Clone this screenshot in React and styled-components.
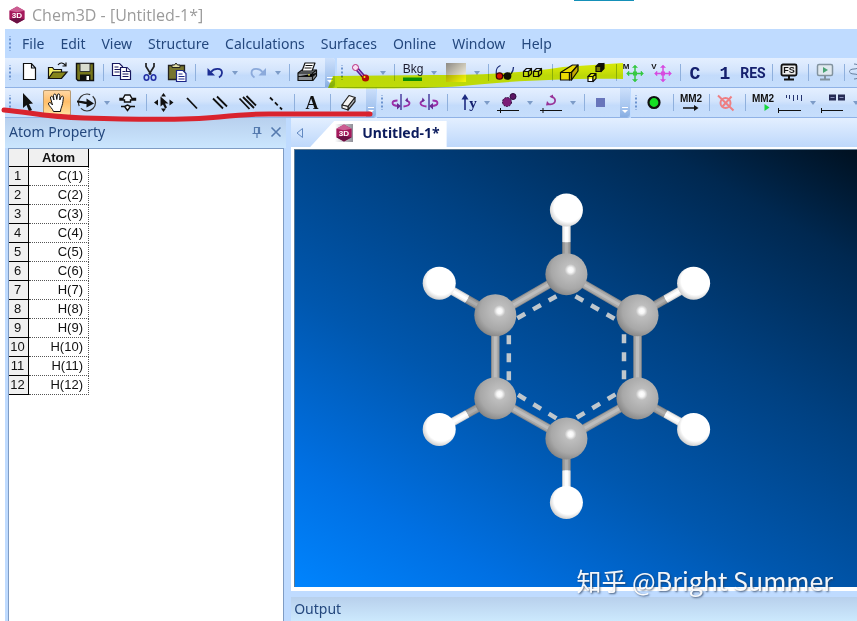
import React from 'react';
import styled, { createGlobalStyle, ThemeProvider } from 'styled-components';

const theme = {
  colors: {
    frame: '#bfdbff',
    ink: '#24487e',
    border: '#7f9cc4',
    line: '#8fb2e6',
  },
  fonts: {
    ui: "'Noto Sans', 'Open Sans', sans-serif",
    title: "'Open Sans', 'Noto Sans', sans-serif",
    table: "'Liberation Sans', Arial, sans-serif",
    mark: "'Noto Sans CJK SC', sans-serif",
  },
};

const GlobalStyle = createGlobalStyle`
  * {
    box-sizing: border-box;
  }

  body {
    margin: 0;
    background: white;
  }

  button {
    padding: 0;
    border: 0;
    background: none;
    font: inherit;
    color: inherit;
  }
`;

const Window = styled.div`
  display: flex;
  flex-direction: column;
  position: relative;
  min-height: 100vh;
  overflow: hidden;
  font-family: ${({ theme }) => theme.fonts.ui};
  font-size: 14px;
  color: ${({ theme }) => theme.colors.ink};
`;

const TitleBar = styled.header`
  display: flex;
  align-items: center;
  gap: 6px;
  height: 29px;
  padding-left: 8px;
  background: white;

  h1 {
    margin: 0;
    font-family: ${({ theme }) => theme.fonts.title};
    font-size: 16px;
    font-weight: 400;
    color: #9b9b9b;
  }
`;

const TopMark = styled.span`
  position: absolute;
  top: 0;
  left: 67%;
  width: 7%;
  height: 1px;
  background: #1590b8;
`;

const Frame = styled.div`
  display: flex;
  flex: 1;
  flex-direction: column;
  margin-left: 5px;
  background: ${({ theme }) => theme.colors.frame};
`;

const MenuBar = styled.nav`
  display: flex;
  align-items: center;
  height: 29px;
  line-height: 20px;
  white-space: nowrap;

  div {
    display: flex;
    gap: 16px;
    padding-left: 7px;
  }
`;

const ToolRow = styled.div`
  display: flex;
  gap: ${({ $gap }) => $gap};
  height: 30px;
  overflow: hidden;
`;

const ToolStrip = styled.div`
  display: flex;
  flex: ${({ $grow }) => ($grow ? '1 0 auto' : 'none')};
  border-bottom: 1px solid ${({ theme }) => theme.colors.line};
  border-radius: 0 3px 3px 0;
  background: linear-gradient(#e4efff, #d3e4fc 45%, #c3dbfb 60%, #c6defc);
`;

const Grip = styled.span`
  flex: none;
  align-self: ${({ $centered }) => ($centered ? 'center' : 'flex-start')};
  width: 10px;
  height: 15px;
  margin-top: ${({ $centered }) => ($centered ? '0' : '7px')};
  background: radial-gradient(circle, #6b93cf 1px, transparent 1px) center / 4px 4px
    repeat-y;
`;

const ToolButton = styled.button`
  flex: none;
  width: 28px;
  height: 28px;

  svg {
    display: block;
    overflow: visible;
  }
`;

const ActiveToolButton = styled(ToolButton)`
  height: 26px;
  margin-top: 2px;
  border-radius: 2px;
  background: linear-gradient(#ffd9a8, #ffbe69 45%, #ffe3a3);
  box-shadow: inset 0 0 0 1px #b79a72;

  svg {
    margin-top: -2px;
  }
`;

const DropButton = styled.button`
  display: flex;
  flex: none;
  align-items: center;
  justify-content: center;
  width: 15px;
  height: 30px;

  &::after {
    content: '';
    border: 3px solid transparent;
    border-top: 4px solid #7d9cc8;
    border-bottom: 0;
  }
`;

const Divider = styled.span`
  flex: none;
  width: 8px;
  height: 17px;
  margin-top: 6px;
  background: linear-gradient(#8fb0dd, #8fb0dd) center / 1px 100% no-repeat;
`;

const MoreButton = styled.button`
  display: flex;
  flex: none;
  flex-direction: column;
  align-items: center;
  justify-content: flex-end;
  gap: 2px;
  width: 10px;
  margin-left: 4px;
  padding-bottom: 4px;
  border-radius: 0 3px 3px 0;
  background: linear-gradient(#cde0fb, #a9c7f0 60%, #88aee2);

  &::before {
    content: '';
    width: 6px;
    height: 1px;
    background: white;
  }

  &::after {
    content: '';
    border: 3px solid transparent;
    border-top-color: white;
    border-bottom: 0;
  }
`;

const Workspace = styled.main`
  display: grid;
  flex: 1;
  grid-template-columns: minmax(180px, 33%) minmax(0, 1fr);
  gap: 5px;
`;

const Panel = styled.aside`
  display: flex;
  flex-direction: column;
`;

const PanelHeader = styled.div`
  display: flex;
  align-items: center;
  justify-content: space-between;
  height: 30px;
  padding: 0 3px 2px 4px;
  background: linear-gradient(#b8d0ee, #cbe6fe);

  h2 {
    margin: 0;
    font-size: 14px;
    font-weight: 400;
    line-height: 20px;
  }

  div {
    display: flex;
    gap: 5px;
  }

  button {
    height: 14px;
  }

  svg {
    display: block;
  }
`;

const PanelBody = styled.div`
  flex: 1;
  margin: 0 2px 0 3px;
  border: 1px solid ${({ theme }) => theme.colors.border};
  border-bottom: 0;
  background: white;
`;

const AtomTable = styled.table`
  border-collapse: separate;
  border-spacing: 0;
  font-family: ${({ theme }) => theme.fonts.table};
  font-size: 13px;
  line-height: 18px;
  color: #111;

  th,
  td {
    height: 19px;
    padding: 0;
  }

  th {
    width: 20px;
    border-right: 1px solid black;
    border-bottom: 1px solid black;
    background: #f0f0f0;
    font-weight: 400;
  }

  thead th {
    height: 18px;
    line-height: 17px;
  }

  thead th:last-child {
    width: 60px;
    font-weight: 700;
  }

  tbody th {
    padding-right: 2px;
    text-align: center;
  }

  td {
    padding-right: 5px;
    border-right: 1px dotted #555;
    border-bottom: 1px dotted #555;
    text-align: right;
  }
`;

const Editor = styled.section`
  display: flex;
  flex-direction: column;
`;

const TabStrip = styled.div`
  display: flex;
  align-items: flex-end;
  height: 29px;
  padding-left: 1px;
  background: linear-gradient(#e3efff, #bed8fb);
`;

const ScrollButton = styled.button`
  align-self: center;
  width: 18px;
  height: 14px;

  svg {
    display: block;
  }
`;

const Tab = styled.button`
  display: flex;
  align-items: center;
  gap: 9px;
  height: 26px;
  padding: 0 7px 3px 25px;
  background: white;
  clip-path: polygon(24px 0, 100% 0, 100% 100%, 0 100%);
  font-weight: 700;
  color: #0b1b5c;
`;

const TabIcon = styled.span`
  display: flex;
  width: 18px;
  height: 18px;
  background: linear-gradient(90deg, white, #8f8f98);
`;

const Viewport = styled.div`
  display: flex;
  flex: 1;
  border: solid white;
  border-width: 2px 0 4px 3px;
  background: linear-gradient(
    30deg,
    #0085ff,
    #0070e3 17%,
    #0057ae 39%,
    #004182 62%,
    #002850 85%,
    #00101f
  );
  background-origin: border-box;
  box-shadow: inset 1px 1px 0 #5d7a93;

  svg {
    display: block;
    width: 100%;
    height: 100%;
  }
`;

const OutputHeader = styled.div`
  display: flex;
  align-items: center;
  height: 25px;
  margin-top: 6px;
  padding-left: 3px;
  background: linear-gradient(#b8d0ec, #cdeafe);
  line-height: 20px;
`;

const Ink = styled.svg`
  position: absolute;
  top: 58px;
  left: 0;
  pointer-events: none;
  mix-blend-mode: ${({ $blend }) => $blend || 'normal'};
`;

const Watermark = styled.span`
  position: absolute;
  right: 24px;
  bottom: 23px;
  font-family: ${({ theme }) => theme.fonts.mark};
  font-size: 25px;
  line-height: 38px;
  color: rgba(255, 255, 255, 0.95);
  text-shadow: 1px 1px 2px rgba(40, 60, 90, 0.8);
  white-space: nowrap;
`;

const Logo = ({ size }) => (
  <svg width={size} height={size} viewBox='0 0 20 20'>
    <path d='M10 .5l8.500 4.800v9.400L10 19.500l-8.500-4.800V5.300z' fill='#a5195c' />
    <path d='M10 .5l8.500 4.800L10 7 1.500 5.300z' fill='#cc5d92' />
    <path d='M1.500 14.700L10 13l8.500 1.700L10 19.500z' fill='#6b1144' />
    <text
      x='10'
      y='13.500'
      textAnchor='middle'
      fontFamily='Liberation Sans'
      fontWeight='700'
      fontSize='9'
      fill='white'
    >
      3D
    </text>
  </svg>
);

const Label = ({ x = 14, y, size, color = '#15206e', family, bold, children }) => (
  <text
    x={x}
    y={y}
    textAnchor='middle'
    fontSize={size}
    fontFamily={family || 'Liberation Sans'}
    fontWeight={bold ? 700 : 400}
    fill={color}
    stroke='none'
  >
    {children}
  </text>
);

const CrossArrows = ({ color }) => (
  <g stroke={color} fill={color}>
    <path d='M15 9v13M8.500 15.500h13' strokeWidth='1.500' />
    <path
      d='M12.500 9.500L15 7l2.500 2.500zM12.500 21.500L15 24l2.500-2.500zM9 13l-2.500 2.500L9 18zM21 13l2.500 2.500L21 18z'
      strokeWidth='.5'
    />
    <path d='M13 13.500h4v4h-4z' stroke='none' />
  </g>
);

const Cube = ({ x, y, fill = 'none', side = 'none' }) => (
  <g transform={`translate(${x} ${y})`} stroke='#111' strokeWidth='1.200' strokeLinejoin='round'>
    <path d='M0 3h5v5H0z' fill={fill} />
    <path d='M0 3l3-3h5L5 3zM5 3l3-3v5L5 8z' fill={side} />
  </g>
);

const SpinArrow = ({ flip }) => (
  <g transform={flip ? 'matrix(-1 0 0 1 28 0)' : undefined} fill='none'>
    <path d='M14 6v16' stroke='#4a3fa0' strokeWidth='1.500' />
    <path
      d='M12 18c-4 0-6.500-1.300-6.500-3s2.500-2.500 5-2.500M16.500 18.500c4-.5 6-1.800 6-3.300 0-1.200-1.500-2-3-2.500'
      stroke='#9b2fa8'
      strokeWidth='1.800'
    />
    <path d='M10 15l4 3-4 3.500zM20.500 9.500l-2.500 3 3.500 2z' fill='#6a2c96' />
  </g>
);

const icons = {
  New: (
    <path
      d='M8.500 5.500h8l4 4.500v11.500h-12zM16.500 5.500V10h4'
      fill='white'
      stroke='#111'
      strokeWidth='1.200'
    />
  ),
  Open: (
    <g stroke='#111' strokeWidth='1.200'>
      <path d='M5.500 20.500v-11h4l1.500 2h7.500v3' fill='#f3ee6a' />
      <path d='M5.500 20.500l4.500-6.500h14l-5.500 6.500z' fill='#85851a' />
      <path d='M15 7c2-3 5.500-2.500 7.500.5M23 4.500v3.500h-3.500' fill='none' />
    </g>
  ),
  Save: (
    <g>
      <path d='M5.500 5.500h17v17h-15.500l-1.500-1.500z' fill='#76761b' stroke='#111' strokeWidth='1.400' />
      <path d='M9 5.500h10v8H9z' fill='#d9ddd0' stroke='#333' />
      <path d='M9 16.500h10.500v6H9z' fill='#111' />
      <path d='M15.500 18h2.500v4h-2.500z' fill='white' />
    </g>
  ),
  Copy: (
    <g fill='white' stroke='#16165e' strokeWidth='1.200'>
      <path d='M5.500 5.500h7l3 3v9h-10z' />
      <path d='M7.500 9h4M7.500 11.500h6M7.500 14h5' />
      <path d='M13.500 9.500h6.500l3.500 3.500v8.500h-10z' />
      <path d='M19.500 9.500v4h4M15.500 13.500h3M15.500 16h6M15.500 18.500h6' />
    </g>
  ),
  Cut: (
    <g fill='none'>
      <path d='M11 5v3.500l5 8M19 5v3.500l-5 8' stroke='#222' strokeWidth='1.700' />
      <ellipse cx='11.500' cy='19.500' rx='2.300' ry='2.800' stroke='#2330a5' strokeWidth='1.600' />
      <ellipse cx='18.500' cy='19.500' rx='2.300' ry='2.800' stroke='#2330a5' strokeWidth='1.600' />
    </g>
  ),
  Paste: (
    <g>
      <path d='M5.500 7.500h16v14h-16z' fill='#77752f' stroke='#222' strokeWidth='1.300' />
      <path d='M9 9.500V7h2.500l1.500-2 1.500 2H17v2.500z' fill='#e2dfa6' stroke='#222' />
      <path d='M13.500 12.500h6.500l3 3v8h-9.500z' fill='white' stroke='#1c2688' strokeWidth='1.200' />
      <path d='M15.500 16h4M15.500 18.500h6M15.500 21h6' stroke='#1c2688' />
    </g>
  ),
  Undo: (
    <g>
      <path d='M8.500 10v7.500H16z' fill='#1d2e94' />
      <path
        d='M12 14c3-4 11-4.500 11 1 0 2-1.500 3.500-3 4.500'
        fill='none'
        stroke='#1d2e94'
        strokeWidth='1.800'
      />
    </g>
  ),
  Redo: (
    <g>
      <path d='M24 10v7.500h-7.500z' fill='#8caadb' />
      <path
        d='M20.500 14c-3-4-11-4.500-11 1 0 2 1.500 3.500 3 4.500'
        fill='none'
        stroke='#8caadb'
        strokeWidth='1.800'
      />
    </g>
  ),
  Print: (
    <g stroke='#111' strokeWidth='1.200' strokeLinejoin='round'>
      <path d='M5 15l4-3h14.500v6L20 22.500H5z' fill='#8b9095' />
      <path d='M9 13l3-8h10l-3 8z' fill='white' />
      <path d='M12.500 7.500h7M11.500 10h7M5 15h14.500M5 18.500h14.500l4-3.500M19.500 15l4-3M19.500 15v7' />
      <path d='M15 16.800h2' stroke='#e9e34a' />
    </g>
  ),
  Bond: (
    <g>
      <path d='M10 11l7 8' stroke='#5b1c94' strokeWidth='4' />
      <path d='M10 11l7 8' stroke='#e7b8ea' />
      <circle cx='8.500' cy='9.500' r='3' fill='#f7dff4' stroke='#b9287a' />
      <circle cx='18.500' cy='20' r='3.600' fill='#b80f2c' />
      <circle cx='17.500' cy='19' r='1' fill='white' />
    </g>
  ),
  Background: (
    <g>
      <Label x={15} y={15} size={12} color='#1b1b2e' family='Liberation Sans Narrow, Liberation Sans'>
        Bkg
      </Label>
      <path d='M5 19.500h19v3.500H5z' fill='#0a9014' />
    </g>
  ),
  Shade: <path d='M5 5h20v19H5z' fill='url(#shade)' />,
  Glasses: (
    <g fill='none' stroke='#1b2d78' strokeWidth='1.300'>
      <path d='M4.500 17c-1-6 .5-8 4-9.500M19 16c1.500-2 2.500-4 2.500-7' />
      <path d='M11 17.500h2' />
      <circle cx='7.500' cy='18' r='3.200' fill='#e01515' stroke='#400' />
      <circle cx='15.500' cy='18' r='3.200' fill='#111' stroke='#111' />
    </g>
  ),
  Stereo: (
    <g>
      <Cube x={3.5} y={10.5} />
      <Cube x={13.5} y={10.5} />
    </g>
  ),
  Perspective: (
    <g stroke='#111' strokeWidth='1.200' strokeLinejoin='round' fill='#f5dc24'>
      <path d='M4.500 14.500L16.500 7h5.500l-6.500 7.500z' />
      <path d='M15.500 14.500L22 7v6l-6.500 9z' fill='#c9a913' />
      <path d='M4.500 14.500h9v7.500h-9z' />
      <path d='M13.500 14.500h2v7.500h-2z' fill='#c9a913' />
    </g>
  ),
  Depth: (
    <g>
      <Cube x={4} y={15.5} fill='white' side='#e8e89c' />
      <Cube x={12} y={5.5} fill='#7a7a45' side='#111' />
    </g>
  ),
  'Move model': (
    <g>
      <Label x={6} y={11} size={8} color='#111' bold>
        M
      </Label>
      <CrossArrows color='#35c842' />
    </g>
  ),
  'Move view': (
    <g>
      <Label x={6} y={11} size={8} color='#111' bold>
        V
      </Label>
      <CrossArrows color='#d64be0' />
    </g>
  ),
  Symbols: (
    <Label x={11} y={21} size={18} bold family='Liberation Mono'>
      C
    </Label>
  ),
  Serials: (
    <Label x={13} y={21} size={18} bold family='Liberation Mono'>
      1
    </Label>
  ),
  Residues: (
    <Label x={13} y={20} size={14} bold family='Liberation Sans Narrow, Roboto'>
      RES
    </Label>
  ),
  'Full screen': (
    <g>
      <rect x='5.500' y='6.500' width='15' height='11' rx='1.500' fill='#eee' stroke='#111' strokeWidth='1.800' />
      <path d='M13 18v3M8 21.500h10' stroke='#111' strokeWidth='2' />
      <Label x={13} y={15} size={9} color='#111' bold>
        FS
      </Label>
    </g>
  ),
  Play: (
    <g>
      <rect x='5.500' y='6.500' width='15' height='11' rx='1.500' fill='#dfe8ee' stroke='#82939f' strokeWidth='1.500' />
      <path d='M13 18v3M8 21.500h10' stroke='#82939f' strokeWidth='2' />
      <path d='M11 9l5 3-5 3z' fill='#4aa374' />
    </g>
  ),
  Spectrum: (
    <path d='M6 6c6 0 6 5 0 5s-6 5 0 5 6 5 0 5' fill='none' stroke='#68809e' />
  ),
  Select: <path d='M8 5v15l3.500-3 2.500 6.500 3-1.500-3-6 4-.5z' fill='#111' />,
  Translate: (
    <path
      transform='translate(1 0)'
      d='M9.500 23.500c-1-3-4.500-5.500-5-7.500-.3-1.500 1.500-2 2.500-.8l1.500 1.800-2-7c-.5-1.800 1.800-2.500 2.400-.8l1 2.800-.4-4.500c0-1.800 2.300-2 2.600-.2l.7 4.200.6-4.500c.3-1.600 2.400-1.400 2.400.3v4.700l1.300-3c.7-1.500 2.600-.9 2.300.7-.5 3-.4 5-1.400 8-.5 2-1.500 3.500-1.500 5.800z'
      fill='white'
      stroke='#111'
    />
  ),
  Rotate: (
    <g>
      <circle cx='16' cy='14.500' r='8.500' fill='none' stroke='#333' strokeWidth='1.200' strokeDasharray='20 3' />
      <path d='M6 13.500c4 0 6 1.500 11 1.500' stroke='#111' strokeWidth='2.200' fill='none' />
      <path d='M15.500 10.500l7.500 5-7.500 4z' fill='#111' />
    </g>
  ),
  Zoom: (
    <g fill='#eef5ff' stroke='#111' strokeWidth='1.400'>
      <path d='M9 10.500L11 7h5l2 3.500h3.500v1.500h-5v2h-6v-2H6v-1.500z' />
      <path d='M7 18.500h3M17 18.500h4M10.500 18.500l3-1.500 3 1.500-3 4z' />
    </g>
  ),
  'Move objects': (
    <g fill='#111'>
      <path d='M11 8.500L13.500 5 16 8.500zM11 20.500l2.500 3.500 2.500-3.500zM8 11.500L4 14.500l4 3zM19.500 11.500l4 3-4 3z' />
      <path d='M10.500 8.500v10l2.500-2 2 4 2-1-2-4h3.500z' />
    </g>
  ),
  'Single bond': <path d='M9 10l10 10.500' stroke='#111' strokeWidth='1.800' />,
  'Double bond': (
    <path d='M7 10.500l10 10M11 8.500l10 10' stroke='#111' strokeWidth='1.800' />
  ),
  'Triple bond': (
    <path d='M5.500 10.500l10 10.500M9 9l11 11M12.500 8l9.500 9.500' stroke='#111' strokeWidth='1.800' />
  ),
  'Dashed bond': (
    <path d='M8 9.500l12 12' stroke='#111' strokeWidth='1.800' strokeDasharray='4 3' />
  ),
  Text: (
    <Label y={21} size={18} color='#111' bold family='Liberation Serif'>
      A
    </Label>
  ),
  Eraser: (
    <g fill='#f4f4f4' stroke='#222' strokeWidth='1.200' strokeLinejoin='round'>
      <path d='M8 17l7-9.500 6 2-7 9z' />
      <path d='M14 18.500l7-9v4L14 22z' fill='#b9bdc3' />
      <path d='M8 17l6 1.500V22l-6-2z' />
    </g>
  ),
  'Spin X': <SpinArrow />,
  'Spin Y': <SpinArrow flip />,
  Axis: (
    <g>
      <path d='M14 10v12' stroke='#1c2a80' strokeWidth='1.600' />
      <path d='M10.500 11.500L14 6l3.500 5.500z' fill='#1c2a80' />
      <Label x={22} y={20} size={15} bold family='Liberation Serif'>
        y
      </Label>
    </g>
  ),
  'Spin model': (
    <g>
      <circle cx='13' cy='14' r='4.500' fill='#7b1c77' stroke='#2c0c3c' strokeDasharray='2 1' />
      <circle cx='19' cy='8.500' r='3' fill='#5d1765' stroke='#2c0c3c' />
      <path d='M3 22.500h22M6.500 20v5' stroke='#111' />
    </g>
  ),
  'Rock model': (
    <g>
      <path d='M10.500 16c6 1.500 9-2 7-5.500-1-1.500-2.500-2-4-2' fill='none' stroke='#983398' strokeWidth='1.600' />
      <path d='M9 17.500l1-4.500 3.500 4zM16 6.500l-3.500 2 3.500 2z' fill='#983398' />
      <path d='M3 22.500h22M6 20v5' stroke='#111' />
    </g>
  ),
  Stop: <path d='M8 10h9v9H8z' fill='#6875bb' />,
  Run: (
    <circle cx='13' cy='14.500' r='5.500' fill='#16df24' stroke='#111' strokeWidth='2.200' />
  ),
  Minimize: (
    <g>
      <Label y={14} size={10} color='#111' bold>
        MM2
      </Label>
      <path d='M6 20h12' stroke='#111' strokeWidth='1.500' />
      <path d='M17 17l4.500 3-4.500 3z' fill='#111' />
    </g>
  ),
  Stopped: (
    <g fill='none' stroke='#ee7f83' strokeWidth='2'>
      <circle cx='12.500' cy='15' r='5' />
      <path d='M5 7.500l15.500 15M18.500 8.500l-9 10' />
    </g>
  ),
  Dynamics: (
    <g>
      <Label y={14} size={10} color='#111' bold>
        MM2
      </Label>
      <path d='M15.500 16l5 3.500-5 3.500z' fill='#16d83c' />
    </g>
  ),
  Speed: (
    <g stroke='#111'>
      <path d='M9.500 7v3M12.500 7v4M16.500 7v6M20.500 7v5M24.500 7v6' stroke='#25336f' />
      <path d='M1 22.500h23M1.500 20v5' />
    </g>
  ),
  Frames: (
    <g>
      <path d='M9 6.500h7v6H9zM18 6.500h7v6h-7z' fill='#252b55' />
      <path d='M10.500 9.500h4M19.500 9.500h4' stroke='#8b91bd' />
      <path d='M1 22.500h22M1.500 20v5' stroke='#111' />
    </g>
  ),
};

// '|' is a divider and 'v' a drop-down arrow, the rest are icon names
const fileTools = [
  'New', 'Open', 'Save', '|', 'Copy', 'Cut', 'Paste', '|', 'Undo', 'v', 'Redo', 'v', '|', 'Print',
];
const displayTools = [
  'Bond', 'v', '|', 'Background', 'v', 'Shade', 'v', '|', 'Glasses', 'Stereo', '|',
  'Perspective', 'Depth', '|', 'Move model', 'Move view', '|', 'Symbols', 'Serials',
  'Residues', '|', 'Full screen', '|', 'Play', '|', 'Spectrum',
];
const buildTools = [
  'Select', 'Translate', 'Rotate', 'v', 'Zoom', '|', 'Move objects', 'Single bond',
  'Double bond', 'Triple bond', 'Dashed bond', '|', 'Text', '|', 'Eraser',
];
const spinTools = [
  'Spin X', 'Spin Y', '|', 'Axis', 'v', 'Spin model', 'v', 'Rock model', 'v', '|', 'Stop',
];
const calcTools = [
  'Run', '|', 'Minimize', '|', 'Stopped', '|', 'Dynamics', 'Speed', 'v', 'Frames', 'v',
];

const Toolbar = ({ label, tools, active, more, grow }) => (
  <ToolStrip role='toolbar' aria-label={label} $grow={grow}>
    <Grip />
    {tools.map((name, index) => {
      if (name === '|') return <Divider key={index} />;
      if (name === 'v')
        return <DropButton key={index} aria-label={`${tools[index - 1]} options`} />;
      const Button = name === active ? ActiveToolButton : ToolButton;
      return (
        <Button key={index} aria-label={name}>
          <svg width='28' height='28' viewBox='0 0 28 28'>
            {icons[name]}
          </svg>
        </Button>
      );
    })}
    {more && <MoreButton aria-label={`More ${label}`} />}
  </ToolStrip>
);

const carbons = [
  [567, 274],
  [638, 315],
  [638, 398],
  [567, 438],
  [496, 398],
  [496, 315],
];

const hydrogens = [
  [567, 210],
  [694, 283],
  [694, 429],
  [567, 502],
  [440, 429],
  [440, 283],
];

const innerBonds = [
  [576, 296, 616, 319],
  [624.5, 334, 624.5, 380],
  [616, 394, 576, 418],
  [557, 418, 518, 394],
  [509.5, 380, 509.5, 334],
  [518, 318, 557, 296],
];

const Cylinder = ({ from, to, dark, mid, light }) => {
  const line = { x1: from[0], y1: from[1], x2: to[0], y2: to[1] };
  return (
    <g>
      <line {...line} stroke={dark} strokeWidth='8.500' />
      <line {...line} stroke={mid} strokeWidth='6.500' />
      <line {...line} stroke={light} strokeWidth='3' />
    </g>
  );
};

const Molecule = () => (
  <svg viewBox='295 149 562 437' role='img' aria-label='Benzene'>
    <defs>
      <radialGradient id='carbon' cx='.6' cy='.4' r='.7'>
        <stop offset='0' stopColor='white' />
        <stop offset='.09' stopColor='#f6f6f6' />
        <stop offset='.2' stopColor='#bebebe' />
        <stop offset='.65' stopColor='#a8a8a8' />
        <stop offset='.85' stopColor='#8e8e8e' />
        <stop offset='1' stopColor='#707070' />
      </radialGradient>
      <radialGradient id='hydrogen' cx='.56' cy='.42' r='.62'>
        <stop offset='0' stopColor='white' />
        <stop offset='.7' stopColor='white' />
        <stop offset='1' stopColor='#c6c6c6' />
      </radialGradient>
    </defs>
    {carbons.map((c, i) => (
      <Cylinder
        key={i}
        from={c}
        to={carbons[(i + 1) % 6]}
        dark='#8c8c8c'
        mid='#a9a9a9'
        light='#bdbdbd'
      />
    ))}
    {innerBonds.map(([x1, y1, x2, y2], i) => (
      <line
        key={i}
        x1={x1}
        y1={y1}
        x2={x2}
        y2={y2}
        stroke='#bfc7cd'
        strokeWidth='4.500'
        strokeDasharray='9 9'
      />
    ))}
    {carbons.map((c, i) => {
      const h = hydrogens[i];
      const half = [c[0] + (h[0] - c[0]) * 0.5, c[1] + (h[1] - c[1]) * 0.5];
      return (
        <g key={i}>
          <Cylinder from={c} to={half} dark='#858585' mid='#9c9c9c' light='#adadad' />
          <Cylinder from={half} to={h} dark='#d0d0d0' mid='#f2f2f2' light='white' />
        </g>
      );
    })}
    {carbons.map(([x, y], i) => (
      <circle key={i} cx={x} cy={y} r='21' fill='url(#carbon)' />
    ))}
    {hydrogens.map(([x, y], i) => (
      <circle key={i} cx={x} cy={y} r='16.500' fill='url(#hydrogen)' />
    ))}
  </svg>
);

const menus = [
  'File', 'Edit', 'View', 'Structure', 'Calculations', 'Surfaces', 'Online', 'Window', 'Help',
];

const App = () => (
  <ThemeProvider theme={theme}>
    <GlobalStyle />
    <Window>
      <TitleBar>
        <Logo size={18} />
        <h1>Chem3D - [Untitled-1*]</h1>
        <TopMark />
      </TitleBar>
      <Frame>
        <MenuBar>
          <Grip $centered />
          <div>
            {menus.map((menu) => (
              <button key={menu}>{menu}</button>
            ))}
          </div>
        </MenuBar>
        <ToolRow $gap='2px'>
          <Toolbar label='Standard' tools={fileTools} more />
          <Toolbar label='Model Display' tools={displayTools} grow />
        </ToolRow>
        <ToolRow $gap='1px'>
          <Toolbar label='Building' tools={buildTools} active='Translate' more />
          <Toolbar label='Demo' tools={spinTools} more />
          <Toolbar label='Calculation' tools={calcTools} grow />
        </ToolRow>
        <Workspace>
          <Panel>
            <PanelHeader>
              <h2>Atom Property</h2>
              <div>
                <button aria-label='Pin'>
                  <svg width='14' height='14' viewBox='0 0 14 14'>
                    <path
                      d='M4.500 8V2.500h5V8M8.500 2.500V8M2.500 8.500h9M7 9v4'
                      fill='none'
                      stroke='#557aae'
                      strokeWidth='1.200'
                    />
                  </svg>
                </button>
                <button aria-label='Close'>
                  <svg width='14' height='14' viewBox='0 0 14 14'>
                    <path d='M2.500 2.500l9 9M11.500 2.500l-9 9' stroke='#557aae' strokeWidth='1.600' />
                  </svg>
                </button>
              </div>
            </PanelHeader>
            <PanelBody>
              <AtomTable>
                <thead>
                  <tr>
                    <th aria-label='Row' />
                    <th>Atom</th>
                  </tr>
                </thead>
                <tbody>
                  {Array.from({ length: 12 }, (_, i) => i + 1).map((n) => (
                    <tr key={n}>
                      <th>{n}</th>
                      <td>{`${n < 7 ? 'C' : 'H'}(${n})`}</td>
                    </tr>
                  ))}
                </tbody>
              </AtomTable>
            </PanelBody>
          </Panel>
          <Editor>
            <TabStrip>
              <ScrollButton aria-label='Previous tab'>
                <svg width='12' height='14' viewBox='0 0 12 14'>
                  <path d='M10.500 2.500v9L5 7z' fill='none' stroke='#6289c2' />
                </svg>
              </ScrollButton>
              <Tab>
                <TabIcon>
                  <Logo size={18} />
                </TabIcon>
                Untitled-1*
              </Tab>
            </TabStrip>
            <Viewport>
              <Molecule />
            </Viewport>
            <OutputHeader>Output</OutputHeader>
          </Editor>
        </Workspace>
      </Frame>
      <Ink width='640' height='40' viewBox='0 0 640 40' $blend='multiply'>
        <path
          d='M333 18l100-1c50 0 90-2 130-8l60-4v16c-50-1-110 2-150 6s-90 4-145 3z'
          fill='#f6fc08'
        />
      </Ink>
      <Ink width='380' height='70' viewBox='0 0 380 70'>
        <path
          d='M4 52c25 2 40 7 80 8 60 2 105 2 135-1 20-2 30-3 50-3h101'
          fill='none'
          stroke='#d9232e'
          strokeWidth='5'
          strokeLinecap='round'
        />
      </Ink>
      <Watermark>知乎 @Bright Summer</Watermark>
      <svg width='0' height='0' aria-hidden='true'>
        <linearGradient id='shade' x1='0' y1='0' x2='1' y2='1'>
          <stop offset='0' stopColor='#8d8a85' />
          <stop offset='.5' stopColor='#c9c4b4' />
          <stop offset='1' stopColor='#fffdf0' />
        </linearGradient>
      </svg>
    </Window>
  </ThemeProvider>
);

export default App;
